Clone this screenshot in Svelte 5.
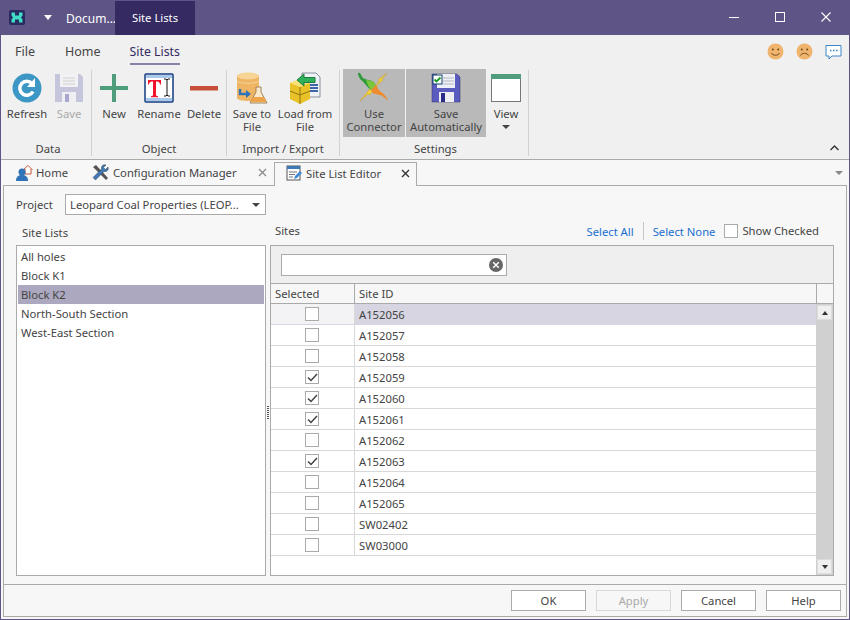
<script>
  const lists = ['All holes', 'Block K1', 'Block K2', 'North-South Section', 'West-East Section'];
  const sites = [
    { id: 'A152056', on: false },
    { id: 'A152057', on: false },
    { id: 'A152058', on: false },
    { id: 'A152059', on: true },
    { id: 'A152060', on: true },
    { id: 'A152061', on: true },
    { id: 'A152062', on: false },
    { id: 'A152063', on: true },
    { id: 'A152064', on: false },
    { id: 'A152065', on: false },
    { id: 'SW02402', on: false },
    { id: 'SW03000', on: false }
  ];
</script>

<div class="window">
  <header class="titlebar">
    <div class="logo">
      <svg width="16" height="15" viewBox="0 0 16 15">
        <rect width="16" height="15" rx="2" fill="#2b2a60" />
        <path d="M2.500 2.500h3.500v3h4v-3h3.500v3l-1.500 2 1.500 2v3H10v-3H6v3H2.500v-3l1.500-2-1.500-2z" fill="#3fdcc6" />
      </svg>
    </div>
    <span class="qat-arrow"></span>
    <span class="doc-title">Docum...</span>
    <div class="context-tab">Site Lists</div>
    <div class="win-buttons">
      <svg width="12" height="12" viewBox="0 0 12 12"><path d="M1 6.500h10" stroke="#fff" /></svg>
      <svg width="12" height="12" viewBox="0 0 12 12"><rect x="1.500" y="1.500" width="9" height="9" fill="none" stroke="#fff" /></svg>
      <svg width="12" height="12" viewBox="0 0 12 12"><path d="M1.500 1.500l9 9M10.500 1.500l-9 9" stroke="#fff" stroke-width="1.100" /></svg>
    </div>
  </header>

  <section class="ribbon">
    <div class="ribbon-tabs">
      <span class="rtab file">File</span>
      <span class="rtab home">Home</span>
      <span class="rtab active">Site Lists</span>
      <div class="feedback">
        <svg width="17" height="17" viewBox="0 0 17 17">
          <circle cx="8.500" cy="8.500" r="8" fill="#f0b46c" />
          <circle cx="5.800" cy="6.500" r="1" fill="#6a4a20" /><circle cx="11.200" cy="6.500" r="1" fill="#6a4a20" />
          <path d="M4.500 10c1.500 3 6.500 3 8 0" fill="none" stroke="#6a4a20" />
        </svg>
        <svg width="17" height="17" viewBox="0 0 17 17">
          <circle cx="8.500" cy="8.500" r="8" fill="#f0b46c" />
          <circle cx="5.800" cy="6.500" r="1" fill="#6a4a20" /><circle cx="11.200" cy="6.500" r="1" fill="#6a4a20" />
          <path d="M4.500 12.500c1.500-3 6.500-3 8 0" fill="none" stroke="#6a4a20" />
        </svg>
        <svg width="17" height="17" viewBox="0 0 17 17">
          <path d="M1 2.500h15v10.500H7l-3 3v-3H1z" fill="#fff" stroke="#3a86c8" />
          <path d="M5 7.500h1.500M8 7.500h1.500M11 7.500h1.500" stroke="#3a86c8" stroke-width="1.500" />
        </svg>
      </div>
    </div>

    <div class="ribbon-body">
      <div class="group g-data">
        <div class="tools">
          <div class="tool w-refresh">
            <svg width="30" height="32" viewBox="0 0 30 32">
              <circle cx="15" cy="16" r="14.500" fill="#3c97c4" />
              <path d="M21 19.500a7 7 0 1 1-1-8" fill="none" stroke="#fff" stroke-width="3.500" />
              <path d="M23 6v9h-8z" fill="#fff" />
            </svg>
            <span>Refresh</span>
          </div>
          <div class="tool w-save disabled">
            <svg width="30" height="32" viewBox="0 0 30 32">
              <path d="M1 2h25l3 3v25H1z" fill="#c5c5dc" />
              <rect x="6" y="2" width="18" height="13" fill="#f2f2f5" />
              <path d="M9 6h12M9 9h12M9 12h12" stroke="#d0d0d0" />
              <rect x="8" y="20" width="14" height="10" fill="#eeeef3" />
              <rect x="11" y="22" width="4" height="8" fill="#a8a8cc" />
            </svg>
            <span>Save</span>
          </div>
        </div>
        <div class="group-name">Data</div>
      </div>

      <div class="group g-object">
        <div class="tools">
          <div class="tool w-new">
            <svg width="30" height="32" viewBox="0 0 30 32"><path d="M13 2h4v12h12v4H17v12h-4V18H1v-4h12z" fill="#4e9e7c" /></svg>
            <span>New</span>
          </div>
          <div class="tool w-rename">
            <svg width="30" height="32" viewBox="0 0 30 32">
              <rect x="1" y="2" width="28" height="28" rx="1" fill="#fff" stroke="#123d80" stroke-width="1.500" />
              <rect x="2" y="3" width="26" height="3" fill="#a9c8ea" />
              <rect x="2" y="26" width="26" height="3" fill="#a9c8ea" />
              <path d="M4 8h13v4.500h-1c-.3-2-1-3-3-3h-1v14l2 .700v1H7v-1l2-.700v-14H8c-2 0-2.700 1-3 3H4z" fill="#f0142a" />
              <path d="M20 7h2l1 1 1-1h2M23 8v15M20 24h2l1-1 1 1h2" fill="none" stroke="#111" />
            </svg>
            <span>Rename</span>
          </div>
          <div class="tool w-delete">
            <svg width="30" height="32" viewBox="0 0 30 32"><rect x="1" y="14" width="28" height="4.500" fill="#c8503a" /></svg>
            <span>Delete</span>
          </div>
        </div>
        <div class="group-name">Object</div>
      </div>

      <div class="group g-import">
        <div class="tools">
          <div class="tool w-savefile">
            <svg width="33" height="32" viewBox="0 0 33 32">
              <path d="M1 4c0-4 22-4 22 0v22c0 4-22 4-22 0z" fill="#eeb565" />
              <ellipse cx="12" cy="4" rx="11" ry="3.500" fill="#f7d596" />
              <path d="M1 9c3 3 19 3 22 0" fill="none" stroke="#f7d596" />
              <path d="M4 17v5h7" fill="none" stroke="#2f74b8" stroke-width="2.500" />
              <path d="M10 18l5 4-5 4z" fill="#2f74b8" />
              <path d="M20 15h5v5l6 11H14l6-11z" fill="#fbe9cc" stroke="#a0825a" />
              <path d="M17 25h11l2.500 5h-16z" fill="#eda34a" />
            </svg>
            <span>Save to<br />File</span>
          </div>
          <div class="tool w-loadfile">
            <svg width="32" height="32" viewBox="0 0 32 32">
              <path d="M13 1h14l4 4v20H13z" fill="#eef1f6" stroke="#8a8f9c" />
              <path d="M17 13h12M17 16h12M17 19h12" stroke="#3f66a8" stroke-width="2" />
              <path d="M1 11l10-4 10 4v16l-10 5-10-5z" fill="#e9c227" />
              <path d="M1 19l10 4 10-4M11 15v17" fill="none" stroke="#8f7413" />
              <path d="M1 11l10 4 10-4-10-4z" fill="#f8e178" />
              <path d="M8 8l7-6v3.500h11v5H15V14z" fill="#2fb05a" stroke="#1d7d3c" />
            </svg>
            <span>Load from<br />File</span>
          </div>
        </div>
        <div class="group-name">Import / Export</div>
      </div>

      <div class="group g-settings">
        <div class="tools">
          <div class="tool toggled w-connector">
            <svg width="32" height="32" viewBox="0 0 32 32">
              <path d="M29 1L20 8l1.500 1L14 17l-1.500-1L2 29l8-7 1.500 1 8-8-1.500-1 7-6-1-1z" fill="#f3cf3e" stroke="#c79a1e" stroke-width=".5" />
              <path d="M0 1c3-1 3 3 5 5 3 2 8 2 11 4l2 4-5 4C8 14 6 10 3 8 1 6 0 3 0 1z" fill="#2f9a3a" />
              <path d="M8 8c3 0 6 1 8 2l2 4-5 4c-2-3-4-6-5-10z" fill="#7cc63e" />
              <path d="M18 13c1 3 3 5 5 7 3 2 6 5 7 9-2-2-5-5-8-6-4-1-8-1-9-5z" fill="#ef8a2e" />
            </svg>
            <span>Use<br />Connector</span>
          </div>
          <div class="tool toggled w-auto">
            <svg width="30" height="32" viewBox="0 0 30 32">
              <path d="M1 2h25l3 3v25H1z" fill="#5a5cc0" stroke="#33336e" stroke-width=".5" />
              <rect x="6" y="2" width="18" height="14" fill="#eef0f8" />
              <path d="M12 6h11M12 9h11M12 12h11" stroke="#b5b5c0" />
              <rect x="8" y="20" width="15" height="10" fill="#eeeef3" />
              <rect x="10" y="21" width="4" height="9" fill="#2b2c88" />
              <rect x="2" y="3" width="9" height="9" fill="#fff" stroke="#0f3f68" />
              <path d="M3.500 7.500l2 2 4-4" fill="none" stroke="#1c9a22" stroke-width="1.800" />
            </svg>
            <span>Save<br />Automatically</span>
          </div>
          <div class="tool w-view">
            <svg width="30" height="32" viewBox="0 0 30 32">
              <rect x=".5" y="2.500" width="29" height="27" fill="#fff" stroke="#777" />
              <rect y="2" width="30" height="5" fill="#4f9d7d" />
            </svg>
            <span>View</span>
            <i class="drop"></i>
          </div>
        </div>
        <div class="group-name">Settings</div>
      </div>

      <svg class="collapse" width="9" height="6" viewBox="0 0 9 6"><path d="M.5 5l4-4 4 4" fill="none" stroke="#333" stroke-width="1.400" /></svg>
    </div>
  </section>

  <nav class="doc-tabs">
    <div class="dtab t-home">
      <svg width="18" height="18" viewBox="0 0 18 18">
        <path d="M9 5l4-3.500L17.500 6M10 5v5h6V5" fill="#fff" stroke="#c0563a" />
        <circle cx="7" cy="8" r="3.500" fill="#2f74b8" />
        <path d="M1 17c0-5 3-6 6-6s6 1 6 6z" fill="#2f74b8" />
      </svg>
      <span>Home</span>
    </div>
    <div class="dtab t-config">
      <svg width="17" height="17" viewBox="0 0 17 17">
        <path d="M1 3l3-2 12 13-2 2z" fill="#555" />
        <path d="M16 3l-2.500 2.500-2-2L14 1c-3-1-5 1-4.500 4L1 13.500 3.500 16 12 7.500c3 .5 5-1.500 4-4.500z" fill="#3f79b5" stroke="#444" stroke-width=".5" />
      </svg>
      <span>Configuration Manager</span>
      <svg class="close dim" width="9" height="9" viewBox="0 0 9 9"><path d="M1 1l7 7M8 1L1 8" stroke="#8a8a8a" stroke-width="1.300" /></svg>
    </div>
    <div class="dtab t-editor">
      <svg width="16" height="16" viewBox="0 0 16 16">
        <rect x="1" y="1" width="13" height="14" fill="#fff" stroke="#555" />
        <rect x="1" y="1" width="13" height="3" fill="#3f79b5" />
        <path d="M3 7h8M3 9.500h6M3 12h4" stroke="#777" />
        <path d="M8 14l1-3 5-5 2 2-5 5z" fill="#3f8ad0" />
      </svg>
      <span>Site List Editor</span>
      <svg class="close" width="9" height="9" viewBox="0 0 9 9"><path d="M1 1l7 7M8 1L1 8" stroke="#333" stroke-width="1.400" /></svg>
    </div>
    <i class="tabs-menu"></i>
  </nav>

  <main class="panel">
    <div class="project-row">
      <label for="project">Project</label>
      <div class="combo" id="project"><span>Leopard Coal Properties (LEOP...</span><i class="drop"></i></div>
    </div>

    <div class="columns">
      <div class="left">
        <div class="left-title">Site Lists</div>
        <ul class="listbox">
          {#each lists as item}
            <li class:picked={item === 'Block K2'}>{item}</li>
          {/each}
        </ul>
      </div>

      <div class="splitter"><i></i></div>

      <div class="right">
        <div class="right-title">
          <span class="sites-label">Sites</span>
          <a class="link" href="#all">Select All</a>
          <span class="link-sep"></span>
          <a class="link" href="#none">Select None</a>
          <span class="check show"></span>
          <span class="show-label">Show Checked</span>
        </div>

        <div class="grid-box">
          <div class="search">
            <div class="search-input">
              <svg width="14" height="14" viewBox="0 0 14 14">
                <circle cx="7" cy="7" r="7" fill="#666" />
                <path d="M4.200 4.200l5.600 5.600M9.800 4.200l-5.600 5.600" stroke="#fff" stroke-width="1.500" />
              </svg>
            </div>
          </div>
          <div class="grid-head">
            <div class="c-sel">Selected</div>
            <div class="c-id">Site ID</div>
            <div class="c-end"></div>
          </div>
          <div class="grid-body">
            <div class="rows">
              {#each sites as s, i}
                <div class="row" class:first={i === 0}>
                  <div class="c-sel">
                    <span class="check">
                      {#if s.on}
                        <svg width="11" height="11" viewBox="0 0 11 11"><path d="M1 5.500l3 3 6-6.500" fill="none" stroke="#444" stroke-width="1.500" /></svg>
                      {/if}
                    </span>
                  </div>
                  <div class="c-id">{s.id}</div>
                </div>
              {/each}
            </div>
            <div class="scrollbar">
              <div class="sb-btn"><i class="up"></i></div>
              <div class="sb-btn"><i class="down"></i></div>
            </div>
          </div>
        </div>
      </div>
    </div>

    <footer class="actions">
      <button>OK</button>
      <button disabled>Apply</button>
      <button>Cancel</button>
      <button>Help</button>
    </footer>
  </main>
</div>

<style>
  :global(body) {
    margin: 0;
    font-family: "Noto Sans", "Open Sans", sans-serif;
    font-size: 11.25px;
    color: #444;
  }

  .window {
    width: 850px;
    height: 620px;
    box-sizing: border-box;
    display: flex;
    flex-direction: column;
    background: #f7f7f7;
    border: solid #5e5586;
    border-width: 0 1px 1px;
    overflow: hidden;
  }

  .titlebar {
    height: 35px;
    flex: none;
    margin: 0 -1px;
    display: flex;
    background: #5e5586;
    color: #fff;
  }

  .logo {
    margin: 10px 0 0 9px;
    height: 15px;
  }

  .logo svg { display: block; }

  .qat-arrow {
    margin: 15px 0 0 19px;
    border: solid transparent;
    border-width: 5px 4.500px 0;
    border-top-color: #fff;
    height: 0;
  }

  .doc-title {
    margin: 10px 0 0 14px;
    width: 49px;
    font-size: 12px;
  }

  .context-tab {
    width: 80px;
    margin-top: 1px;
    padding-top: 9px;
    text-align: center;
    background: #352a62;
    box-sizing: border-box;
  }

  .win-buttons {
    margin-left: auto;
    display: flex;
    gap: 34px;
    padding: 11px 18px 0 0;
  }

  .win-buttons svg {
    display: block;
  }

  .ribbon {
    height: 125px;
    flex: none;
    box-sizing: border-box;
    background: #f0f0f0;
    border-bottom: 1px solid #aaa;
  }

  .ribbon-tabs {
    height: 34px;
    display: flex;
    font-size: 12.500px;
  }

  .rtab {
    padding-top: 8px;
    height: 26px;
    color: #444;
  }

  .rtab.file { margin-left: 14px; }
  .rtab.home { margin-left: 30px; }
  .rtab.active {
    margin-left: 29px;
    height: 20px;
    color: #352a62;
    font-size: 12.300px;
    border-bottom: 2px solid #8a80a8;
  }

  .feedback {
    margin-left: auto;
    display: flex;
    gap: 12px;
    padding: 8px 7px 0 0;
  }

  .feedback svg { display: block; }

  .ribbon-body {
    height: 90px;
    display: flex;
    position: relative;
  }

  .group {
    box-sizing: border-box;
    display: flex;
    flex-direction: column;
    height: 86px;
    margin-top: 1px;
    border-right: 1px solid #d2d2d2;
  }

  .g-data { width: 91px; padding-left: 4px; }
  .g-object { width: 135px; }
  .g-import { width: 113px; }
  .g-settings { width: 189px; padding-left: 3px; }

  .tools {
    display: flex;
    height: 68px;
    margin-top: -1px;
  }

  .tool {
    box-sizing: border-box;
    display: flex;
    flex-direction: column;
    align-items: center;
    text-align: center;
    line-height: 13px;
    padding-top: 3px;
    height: 68px;
    flex: none;
  }

  .tool svg {
    display: block;
    flex: none;
    margin-bottom: 3px;
  }

  .tool span { white-space: nowrap; }

  .w-refresh { width: 44px; }
  .w-save { width: 40px; }
  .w-new { width: 44px; }
  .w-rename { width: 46px; }
  .w-delete { width: 44px; }
  .w-savefile { width: 50px; }
  .w-loadfile { width: 56px; }
  .w-connector { width: 62px; margin-right: 1px; }
  .w-auto { width: 80px; }
  .w-view { width: 36px; margin-left: 2px; }

  .disabled { color: #aaa; }
  .toggled { background: #b9b9b9; }

  .tool .drop {
    margin-top: 5px;
  }

  .drop {
    display: block;
    width: 0;
    height: 0;
    border: solid transparent;
    border-width: 4px 4px 0;
    border-top-color: #444;
  }

  .group-name {
    text-align: center;
    margin-top: 5px;
    line-height: 14px;
  }

  .collapse {
    position: absolute;
    right: 10px;
    top: 76px;
  }

  .doc-tabs {
    height: 25px;
    flex: none;
    display: flex;
    position: relative;
    box-sizing: border-box;
    padding-left: 14px;
  }

  .dtab {
    display: flex;
    align-items: center;
    height: 25px;
    box-sizing: border-box;
  }

  .dtab span { margin-left: 3px; }
  .t-home { width: 77px; }
  .t-home svg, .t-config svg { flex: none; }
  .t-config { width: 182px; }
  .t-config span { margin-left: 4px; width: 145px; }
  .t-config .close { margin-left: 0; }
  .t-editor {
    position: relative;
    width: 143px;
    height: 24px;
    margin-top: 2px;
    padding: 0 0 3px 11px;
    background: #f7f7f7;
    border: 1px solid #aaa;
    border-bottom: 0;
    z-index: 1;
  }
  .t-editor span { margin-left: 4px; width: 93px; }
  .t-editor .close { margin-left: 2px; }

  .tabs-menu {
    position: absolute;
    right: 6px;
    top: 11px;
    border: solid transparent;
    border-width: 4px 4px 0;
    border-top-color: #888;
  }

  .panel {
    flex: 1;
    min-height: 0;
    display: flex;
    flex-direction: column;
    margin: 0 2px 2px;
    border: 1px solid #aaa;
    box-sizing: border-box;
  }

  .project-row {
    height: 37px;
    flex: none;
    display: flex;
    align-items: center;
    padding-left: 12px;
    box-sizing: border-box;
  }

  .project-row label {
    width: 49px;
    flex: none;
  }

  .combo {
    box-sizing: border-box;
    width: 201px;
    height: 21px;
    border: 1px solid #aaa;
    background: #fff;
    display: flex;
    align-items: center;
    padding: 0 5px 0 4px;
    justify-content: space-between;
    white-space: nowrap;
  }

  .columns {
    height: 353px;
    flex: none;
    display: flex;
    padding-left: 12px;
  }

  .left {
    width: 250px;
    flex: none;
    display: flex;
    flex-direction: column;
  }

  .left-title {
    height: 22px;
    padding-left: 6px;
    line-height: 20px;
  }

  .listbox {
    flex: 1;
    margin: 0;
    padding: 1px;
    list-style: none;
    background: #fff;
    border: 1px solid #aaa;
    box-sizing: border-box;
  }

  .listbox li {
    height: 19px;
    line-height: 19px;
    padding-left: 3px;
  }

  .listbox .picked { background: #aca8bf; }

  .splitter {
    width: 4px;
    flex: none;
    display: flex;
    align-items: center;
    justify-content: center;
  }

  .splitter i {
    display: block;
    width: 2px;
    height: 14px;
    margin-top: 26px;
    background: repeating-linear-gradient(#555 0 1px, transparent 1px 2px);
  }

  .right {
    width: 564px;
    flex: none;
    display: flex;
    flex-direction: column;
  }

  .right-title {
    height: 22px;
    box-sizing: border-box;
    padding-bottom: 7px;
    display: flex;
    align-items: center;
  }

  .sites-label {
    margin-left: 5px;
    margin-right: auto;
  }

  .link {
    color: #1a6fd0;
    text-decoration: none;
    margin-top: 1px;
  }

  .link-sep {
    width: 1px;
    height: 18px;
    background: #c4c4c4;
    margin: 0 9px;
  }

  .check {
    box-sizing: border-box;
    display: flex;
    align-items: center;
    justify-content: center;
    width: 14px;
    height: 14px;
    background: #fff;
    border: 1px solid #aaa;
  }

  .check.show { margin-left: 9px; }
  .show-label { margin: -1px 15px 0 4px; }

  .grid-box {
    flex: 1;
    min-height: 0;
    border: 1px solid #aaa;
    display: flex;
    flex-direction: column;
    box-sizing: border-box;
  }

  .search {
    height: 38px;
    flex: none;
    box-sizing: border-box;
    background: #efefef;
    border-bottom: 1px solid #aaa;
    padding: 8px 0 0 10px;
  }

  .search-input {
    box-sizing: border-box;
    width: 226px;
    height: 22px;
    background: #fff;
    border: 1px solid #aaa;
    display: flex;
    justify-content: flex-end;
    align-items: center;
    padding-right: 3px;
  }

  .search-input svg { display: block; }

  .grid-head {
    height: 20px;
    flex: none;
    display: flex;
    box-sizing: border-box;
    border-bottom: 1px solid #aaa;
    background: #f7f7f7;
    line-height: 19px;
  }

  .grid-head .c-sel {
    width: 84px;
    box-sizing: border-box;
    padding-left: 4px;
    border-right: 1px solid #aaa;
  }

  .grid-head .c-id {
    flex: 1;
    padding-left: 4px;
    border-right: 1px solid #aaa;
  }

  .c-end { width: 16px; }

  .grid-body {
    flex: 1;
    min-height: 0;
    display: flex;
  }

  .rows {
    flex: 1;
    background: #fff;
  }

  .row {
    height: 21px;
    display: flex;
    box-sizing: border-box;
    border-bottom: 1px solid #d8d8d8;
  }

  .row .c-sel {
    width: 84px;
    flex: none;
    box-sizing: border-box;
    display: flex;
    align-items: center;
    justify-content: center;
    padding-right: 1px;
    border-right: 1px solid #d8d8d8;
  }

  .row .c-id {
    flex: 1;
    padding-left: 4px;
    line-height: 21px;
  }

  .row.first { background: #d6d5e1; border-bottom-color: #d6d5e1; }
  .row.first .c-sel { background: #f3f3f5; }

  .scrollbar {
    width: 17px;
    flex: none;
    background: #d0d0d0;
    display: flex;
    flex-direction: column;
    justify-content: space-between;
    padding: 1px;
    box-sizing: border-box;
  }

  .sb-btn {
    height: 15px;
    background: #efefef;
    border: 1px solid #dcdcdc;
    box-sizing: border-box;
    display: flex;
    align-items: center;
    justify-content: center;
  }

  .sb-btn i {
    width: 0;
    height: 0;
    border: solid transparent;
    border-width: 0 3.500px;
  }

  .sb-btn .up { border-bottom: 4px solid #333; }
  .sb-btn .down { border-top: 4px solid #333; }

  .actions {
    flex: 1;
    margin-top: 8px;
    border-top: 1px solid #aaa;
    display: flex;
    justify-content: flex-end;
    gap: 10px;
    padding: 5px 5px 0 0;
    box-sizing: border-box;
  }

  .actions button {
    width: 75px;
    height: 21px;
    box-sizing: border-box;
    border: 1px solid #aaa;
    background: #fff;
    font: inherit;
    color: #444;
    padding: 0;
  }

  .actions button:disabled {
    color: #aaa;
    border-color: #d8d8d8;
    background: #f7f7f7;
  }
</style>
